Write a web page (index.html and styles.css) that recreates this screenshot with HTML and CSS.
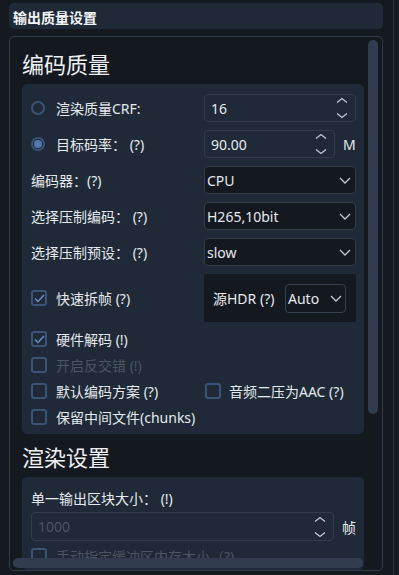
FILE: index.html
```html
<!DOCTYPE html>
<html lang="zh-CN">
<head>
    <meta charset="UTF-8">
    <meta name="viewport" content="width=device-width, initial-scale=1.0">
    <title>输出质量设置</title>
    <link rel="stylesheet" href="styles.css">
</head>
<body>
    <div class="panel">
        <div class="title-bar">输出质量设置</div>
        <div class="frame">
            <div class="scroll-content">
                <h2 class="section-title">编码质量</h2>
                <div class="group">
                    <label class="opt"><span class="radio"></span>渲染质量CRF:</label>
                    <div class="field">
                        <div class="spin full"><span>16</span>
                            <svg class="spin-arrows" width="12" height="22" viewBox="0 0 12 22"><path d="M1 5.5 L6 1.5 L11 5.5 M1 16.5 L6 20.5 L11 16.5"/></svg>
                        </div>
                    </div>

                    <label class="opt"><span class="radio checked"></span>目标码率：&nbsp;(?)</label>
                    <div class="field">
                        <div class="spin short"><span>90.00</span>
                            <svg class="spin-arrows" width="12" height="22" viewBox="0 0 12 22"><path d="M1 5.5 L6 1.5 L11 5.5 M1 16.5 L6 20.5 L11 16.5"/></svg>
                        </div>
                        <span class="unit">M</span>
                    </div>

                    <div class="label">编码器：(?)</div>
                    <div class="combo"><span>CPU</span>
                        <svg class="chev" width="12" height="7" viewBox="0 0 12 7"><path d="M1 1 L6 6 L11 1"/></svg>
                    </div>

                    <div class="label">选择压制编码：&nbsp;(?)</div>
                    <div class="combo"><span>H265,10bit</span>
                        <svg class="chev" width="12" height="7" viewBox="0 0 12 7"><path d="M1 1 L6 6 L11 1"/></svg>
                    </div>

                    <div class="label">选择压制预设：&nbsp;(?)</div>
                    <div class="combo"><span>slow</span>
                        <svg class="chev" width="12" height="7" viewBox="0 0 12 7"><path d="M1 1 L6 6 L11 1"/></svg>
                    </div>

                    <label class="opt"><span class="check on"><svg width="11" height="9" viewBox="0 0 11 9"><path d="M1 4.5 L4 7.5 L10 1"/></svg></span>快速拆帧 (?)</label>
                    <div class="hdr-box">
                        <span>源HDR (?)</span>
                        <div class="combo small"><span>Auto</span>
                            <svg class="chev" width="12" height="7" viewBox="0 0 12 7"><path d="M1 1 L6 6 L11 1"/></svg>
                        </div>
                    </div>

                    <label class="opt span2"><span class="check on"><svg width="11" height="9" viewBox="0 0 11 9"><path d="M1 4.5 L4 7.5 L10 1"/></svg></span>硬件解码 (!)</label>
                    <label class="opt span2 disabled"><span class="check"></span>开启反交错 (!)</label>
                    <label class="opt"><span class="check"></span>默认编码方案 (?)</label>
                    <label class="opt right"><span class="check"></span>音频二压为AAC (?)</label>
                    <label class="opt span2"><span class="check"></span>保留中间文件(chunks)</label>
                </div>

                <h2 class="section-title second">渲染设置</h2>
                <div class="group render">
                    <div class="label tall">单一输出区块大小：&nbsp;(!)</div>
                    <div class="field">
                        <div class="spin wide disabled"><span>1000</span>
                            <svg class="spin-arrows" width="12" height="22" viewBox="0 0 12 22"><path d="M1 5.5 L6 1.5 L11 5.5 M1 16.5 L6 20.5 L11 16.5"/></svg>
                        </div>
                        <span class="unit">帧</span>
                    </div>
                    <label class="opt disabled"><span class="check"></span>手动指定缓冲区内存大小（?)</label>
                </div>
            </div>
            <div class="vscroll"></div>
            <div class="hscroll"></div>
        </div>
    </div>
</body>
</html>
```

FILE: styles.css
```css
body {
    margin: 0;
    background: #151a21;
    font-family: "Noto Sans", "Noto Sans CJK SC", sans-serif;
    font-size: 14px;
    color: #e6e9ee;
    overflow: hidden;
}
.panel {
    width: 394px;
    height: 575px;
    box-sizing: border-box;
    border-right: 1px solid #2a3342;
    padding: 3px 0 0 9px;
}
.title-bar {
    width: 374px;
    height: 26px;
    box-sizing: border-box;
    background: #1f2937;
    border-radius: 5px;
    padding: 1px 0 0 4px;
    display: flex;
    align-items: center;
    font-weight: bold;
    font-size: 14px;
    color: #f3f4f6;
}
.frame {
    position: relative;
    margin-top: 7px;
    width: 374px;
    height: 535px;
    box-sizing: border-box;
    border: 1px solid #2f3a4b;
    border-radius: 5px;
    background: #141920;
    overflow: hidden;
}
.scroll-content {
    padding: 12px 0 0 12px;
}
.section-title {
    margin: 0 0 5px;
    font-size: 22px;
    font-weight: normal;
    line-height: 30px;
    color: #eef0f3;
}
.section-title.second {
    margin-top: 8px;
}
.group {
    width: 342px;
    box-sizing: border-box;
    background: #1f2937;
    border-radius: 5px;
    padding: 10px 8px 8px 9px;
    display: grid;
    grid-template-columns: 173px 152px;
    grid-auto-rows: 28px;
    row-gap: 8px;
}
.group > .opt:nth-last-child(-n+5) {
    height: 18px;
}
.group:not(.render) {
    grid-template-rows: repeat(5, 28px) 48px repeat(4, 18px);
}
.label, .opt {
    display: flex;
    align-items: center;
    white-space: nowrap;
}
.opt.span2 {
    grid-column: 1 / 3;
}
.opt.disabled {
    color: #4b5563;
}
.radio {
    width: 14px;
    height: 14px;
    box-sizing: border-box;
    border: 2px solid #3a5478;
    border-radius: 50%;
    margin-right: 11px;
    display: flex;
    align-items: center;
    justify-content: center;
}
.radio.checked::after {
    content: "";
    width: 8px;
    height: 8px;
    border-radius: 50%;
    background: #5378ae;
}
.check {
    width: 16px;
    height: 16px;
    box-sizing: border-box;
    border: 2px solid #3a5478;
    border-radius: 3px;
    margin-right: 9px;
    display: flex;
    align-items: center;
    justify-content: center;
}
.check svg path {
    fill: none;
    stroke: #6d8fc6;
    stroke-width: 1.5;
}
.opt.right .check {
    margin-left: 1px;
    margin-right: 8px;
}
.field {
    display: flex;
    align-items: center;
}
.spin, .combo {
    height: 28px;
    box-sizing: border-box;
    border: 1px solid #323c4c;
    border-radius: 4px;
    display: flex;
    align-items: center;
    justify-content: space-between;
}
.spin {
    padding: 0 7px 0 6px;
}
.spin.full {
    width: 152px;
}
.spin.short {
    width: 131px;
}
.spin.wide {
    width: 304px;
    height: 29px;
}
.spin.disabled {
    color: #4b5563;
}
.unit {
    margin-left: 8px;
}
.spin-arrows path, .chev path {
    fill: none;
    stroke: #c3c9d2;
    stroke-width: 1.3;
}
.combo {
    background: #141920;
    padding: 0 4px 0 2px;
}
.hdr-box {
    background: #141920;
    display: flex;
    align-items: center;
    justify-content: space-between;
    padding: 0 10px 0 9px;
}
.combo.small {
    width: 61px;
    height: 29px;
    border-color: #374151;
    padding: 0 3px 0 2px;
}
.group.render {
    grid-template-columns: 325px;
    grid-template-rows: 22px 29px 18px;
    row-gap: 3px;
}
.group.render .opt {
    margin-top: 3px;
}
.vscroll {
    position: absolute;
    left: 358px;
    top: 3px;
    width: 10px;
    height: 374px;
    border-radius: 5px;
    background: #313c4e;
}
.hscroll {
    position: absolute;
    left: 3px;
    top: 521px;
    width: 350px;
    height: 10px;
    border-radius: 5px;
    background: #313c4e;
}
```
